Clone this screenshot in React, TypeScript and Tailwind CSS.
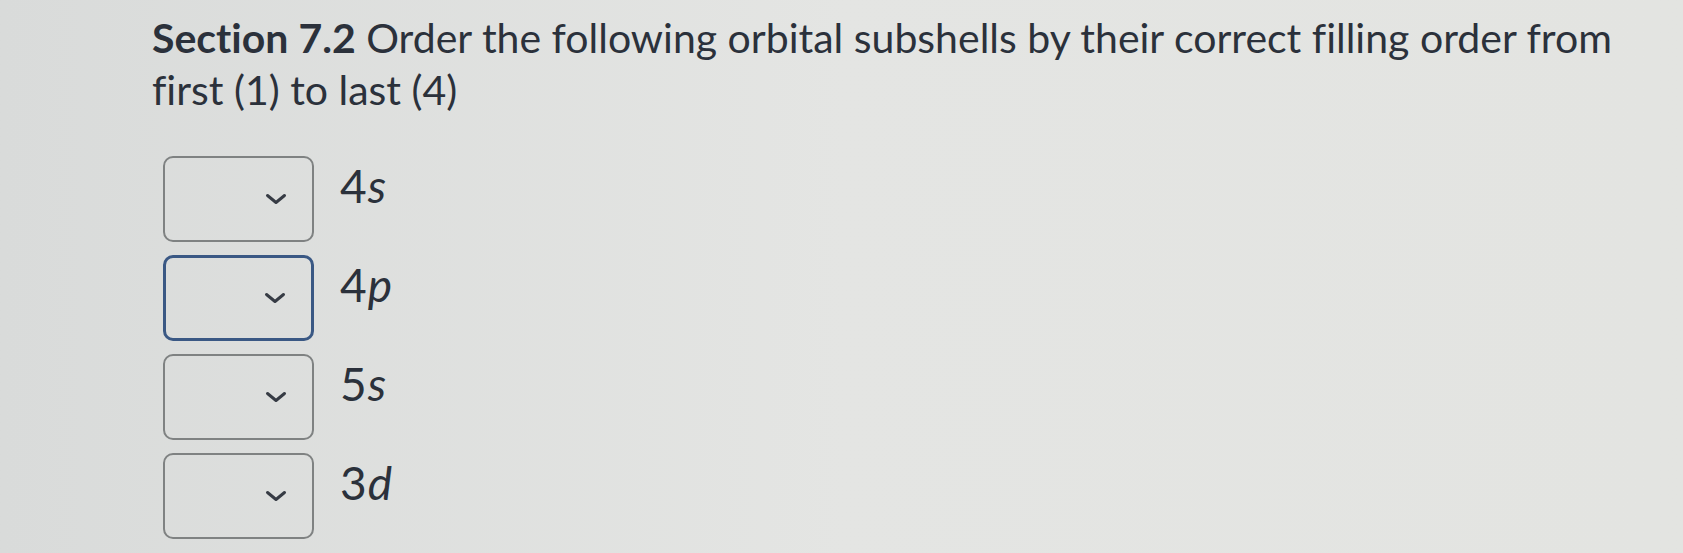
const options = [
  { num: "4", letter: "s", focused: false },
  { num: "4", letter: "p", focused: true },
  { num: "5", letter: "s", focused: false },
  { num: "3", letter: "d", focused: false },
];

const Chevron = () => (
  <svg width="22" height="12" viewBox="0 0 22 12" fill="none">
    <polyline
      points="2.5,2.5 11,9.5 19.5,2.5"
      stroke="#363b44"
      strokeWidth="3"
      strokeLinecap="round"
      strokeLinejoin="round"
    />
  </svg>
);

const App = () => {
  return (
    <div
      className="w-full h-[553px] overflow-hidden bg-gradient-to-r from-[#d9dbda] via-[#e4e5e3] to-[#e3e4e1] text-[#2b313b]"
      style={{ fontFamily: "Lato, 'Open Sans', sans-serif" }}
    >
      <div className="pl-[152px] pr-[40px] pt-[12px]">
        <h2 className="text-[41px] leading-[52px] font-normal [font-variant-ligatures:none]">
          <span className="font-bold">Section 7.2</span> Order the following
          orbital subshells by their correct filling order from first (1) to
          last (4)
        </h2>

        <div className="mt-[40px] flex flex-col gap-[13px] pl-[11px]">
          {options.map((o, i) => (
            <div key={i} className="flex items-start">
              <div
                className={`w-[151px] h-[86px] rounded-[10px] flex items-center justify-end pr-[25px] ${
                  o.focused
                    ? "border-[3px] border-[#3a5884]"
                    : "border-2 border-[#7f8282]"
                }`}
              >
                <Chevron />
              </div>
              <div className="ml-[26px] pt-[7px] text-[46px] leading-none tracking-[1px]">
                {o.num}
                <span className="italic">{o.letter}</span>
              </div>
            </div>
          ))}
        </div>
      </div>
    </div>
  );
};

export default App;
